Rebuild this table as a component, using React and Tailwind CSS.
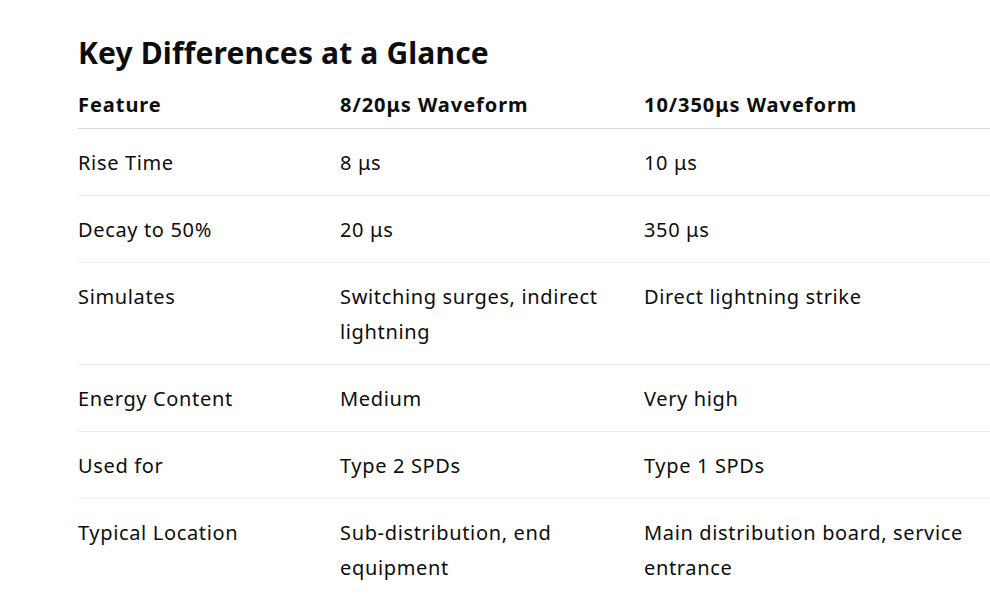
export default function App() {
  const rows = [
    ["Rise Time", "8 μs", "10 μs"],
    ["Decay to 50%", "20 μs", "350 μs"],
    ["Simulates", "Switching surges, indirect lightning", "Direct lightning strike"],
    ["Energy Content", "Medium", "Very high"],
    ["Used for", "Type 2 SPDs", "Type 1 SPDs"],
    ["Typical Location", "Sub-distribution, end equipment", "Main distribution board, service entrance"],
  ];
  return (
    <div
      className="min-h-screen bg-white pl-[78px] pt-[33px] text-[#0d0d0d] overflow-hidden"
      style={{ fontFamily: '"Noto Sans", "Open Sans", sans-serif' }}
    >
      <h3 className="text-[30px] font-bold leading-[40px] mb-[14px] tracking-[0.15px]">Key Differences at a Glance</h3>
      <div className="w-[960px]">
        <div className="grid grid-cols-[262px_304px_1fr] border-b border-[#d9d9d9] pb-[6px] text-[20px] leading-[35px] font-bold tracking-[0.95px]">
          <div className="pr-5">Feature</div>
          <div className="pr-5">8/20μs Waveform</div>
          <div className="pr-5">10/350μs Waveform</div>
        </div>
        {rows.map((r, i) => (
          <div
            key={i}
            className={
              "grid grid-cols-[262px_304px_346px] pt-[16px] pb-[15px] text-[20px] leading-[35px] tracking-[0.65px] " +
              (i < rows.length - 1 ? "border-b border-[#ececec]" : "")
            }
          >
            <div className="pr-5">{r[0]}</div>
            <div className="pr-5">{r[1]}</div>
            <div>{r[2]}</div>
          </div>
        ))}
      </div>
    </div>
  );
}
